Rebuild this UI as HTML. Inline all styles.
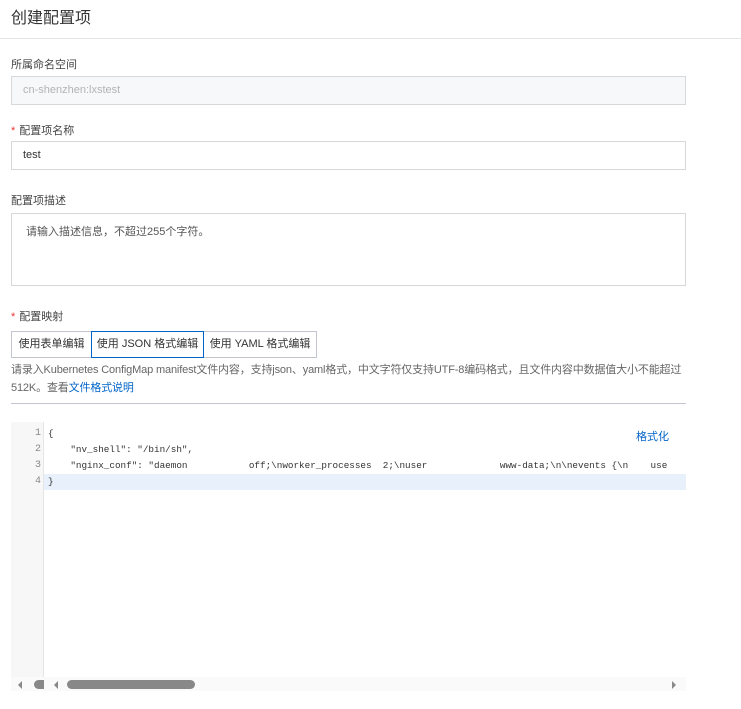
<!DOCTYPE html><html><head><meta charset="utf-8"><style>
*{box-sizing:border-box;margin:0;padding:0}
body{width:741px;height:709px;background:#fff;font-family:"Liberation Sans","Noto Sans CJK SC",sans-serif;font-size:11px;color:#333;position:relative;overflow:hidden}
.a{position:absolute}
.lbl{position:absolute;left:11px;font-size:11px;color:#444}
.req{color:#e33;margin-right:4px}
.inp{position:absolute;left:11px;width:675px;border:1px solid #d7d8d9;font-size:11px}
.btn{position:absolute;top:331px;height:27px;border:1px solid #c4c6cf;line-height:25px;text-align:center;font-size:11px;color:#333;background:#fff;white-space:nowrap}
.ed{position:absolute;left:44px;top:422px;width:642px;height:255px;overflow:hidden}
.code{font-family:"Liberation Mono","DejaVu Sans Mono",monospace;font-size:9.3px;color:#333;white-space:pre;position:absolute;left:4px}
.ln{position:absolute;left:11px;width:30px;text-align:right;font-family:"Liberation Mono",monospace;font-size:10px;color:#888}
</style></head><body>
<div class="a" style="left:11px;top:4px;font-size:16px;color:#333">创建配置项</div>
<div class="a" style="left:0;top:38px;width:741px;height:1px;background:#e3e4e6"></div>
<div class="lbl" style="top:56px">所属命名空间</div>
<div class="inp" style="top:76px;height:29px;background:#f7f8fa;color:#b3b3b3;padding:7px 11px">cn-shenzhen:lxstest</div>
<div class="lbl" style="top:122px"><span class="req">*</span>配置项名称</div>
<div class="inp" style="top:141px;height:29px;padding:7px 11px;color:#333">test</div>
<div class="lbl" style="top:192px">配置项描述</div>
<div class="inp" style="top:213px;height:73px;padding:9px 14px;color:#555">请输入描述信息，不超过255个字符。</div>
<div class="lbl" style="top:308px"><span class="req">*</span>配置映射</div>
<div class="btn" style="left:11px;width:81px">使用表单编辑</div>
<div class="btn" style="left:203px;width:114px">使用 YAML 格式编辑</div>
<div class="btn" style="left:91px;width:113px;border-color:#0064c8;color:#333">使用 JSON 格式编辑</div>
<div class="a" style="left:11px;top:361px;font-size:11px;color:#666;line-height:18px;width:720px;white-space:nowrap;letter-spacing:-0.15px">请录入Kubernetes ConfigMap manifest文件内容，支持json、yaml格式，中文字符仅支持UTF-8编码格式，且文件内容中数据值大小不能超过<br>512K。查看<span style="color:#0064c8">文件格式说明</span></div>
<div class="a" style="left:11px;top:403px;width:675px;height:1px;background:#c4c6cf"></div>
<div class="a" style="left:11px;top:422px;width:33px;height:268px;background:#f7f7f7;border-right:1px solid #e5e5e5"></div>
<div class="a" style="left:44px;top:474px;width:642px;height:16px;background:#e8f1fb"></div>
<div class="a" style="left:636px;top:428px;color:#0064c8;font-size:11px">格式化</div>
<div class="ln" style="top:428px">1</div><div class="ln" style="top:444px">2</div><div class="ln" style="top:460px">3</div><div class="ln" style="top:476px">4</div>
<div class="ed">
<div class="code" style="top:6px">{</div>
<div class="code" style="top:22px">    "nv_shell": "/bin/sh",</div>
<div class="code" style="top:38px">    "nginx_conf": "daemon           off;\nworker_processes  2;\nuser             www-data;\n\nevents {\n    use</div>
<div class="code" style="top:54px">}</div>
</div>
<div class="a" style="left:11px;top:677px;width:675px;height:14px;background:#fafafa"></div>
<div class="a" style="left:18px;top:681px;width:0;height:0;border-top:4px solid transparent;border-bottom:4px solid transparent;border-right:4px solid #888"></div>
<div class="a" style="left:34px;top:680px;width:10px;height:9px;border-radius:5px 0 0 5px;background:#888"></div>
<div class="a" style="left:54px;top:681px;width:0;height:0;border-top:4px solid transparent;border-bottom:4px solid transparent;border-right:4px solid #888"></div>
<div class="a" style="left:67px;top:680px;width:128px;height:9px;border-radius:5px;background:#888"></div>
<div class="a" style="left:672px;top:681px;width:0;height:0;border-top:4px solid transparent;border-bottom:4px solid transparent;border-left:4px solid #888"></div>
</body></html>
